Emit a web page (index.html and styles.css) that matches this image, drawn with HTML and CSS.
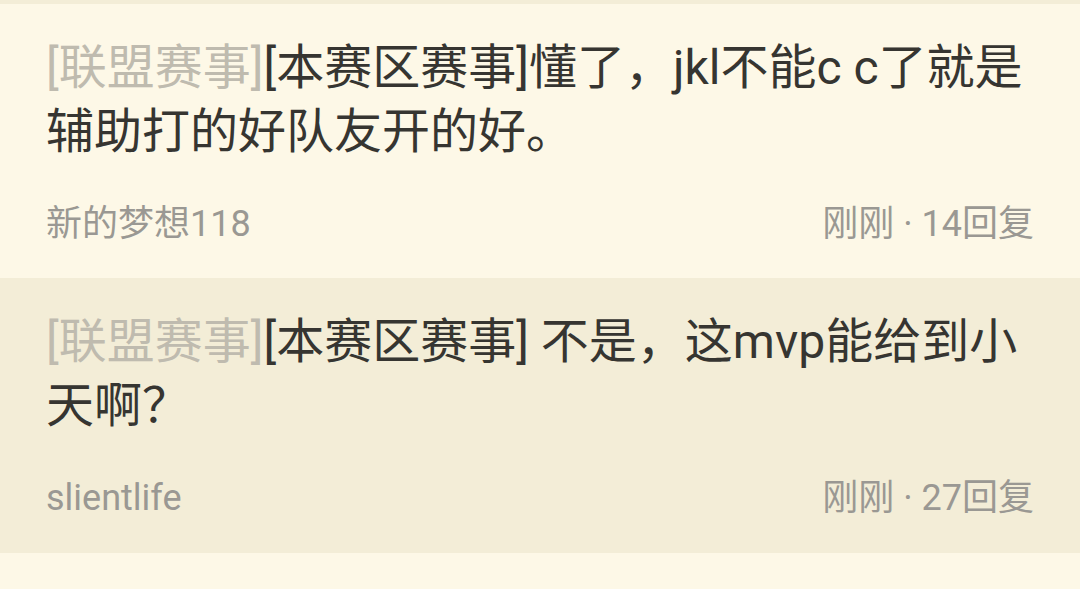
FILE: index.html
```html
<!DOCTYPE html>
<html lang="zh-CN">
<head>
<meta charset="utf-8">
<title>帖子列表</title>
<link rel="stylesheet" href="styles.css">
</head>
<body>
<div class="feed">
  <div class="feed-edge"></div>
  <article class="post">
    <p class="post-title"><span class="tag">[联盟赛事]</span>[本赛区赛事]懂了，jkl不能c c了就是辅助打的好队友开的好。</p>
    <div class="post-meta">
      <span class="author">新的梦想118</span>
      <span class="stats">刚刚 · 14回复</span>
    </div>
  </article>
  <article class="post post-read">
    <p class="post-title"><span class="tag">[联盟赛事]</span>[本赛区赛事] 不是，这mvp能给到小天啊？</p>
    <div class="post-meta">
      <span class="author">slientlife</span>
      <span class="stats">刚刚 · 27回复</span>
    </div>
  </article>
</div>
</body>
</html>
```
FILE: styles.css
```css
html, body {
  margin: 0;
  padding: 0;
}

body {
  width: 1080px;
  height: 589px;
  overflow: hidden;
  background: #fdf8e7;
  font-family: Roboto, "Noto Sans CJK SC", sans-serif;
}

.feed {
  display: flex;
  flex-direction: column;
}

.feed-edge {
  height: 4px;
  background: #f3edd7;
}

.post {
  height: 274px;
  box-sizing: border-box;
  padding: 32px 46px 0 46px;
  background: #fdf8e7;
  display: flex;
  flex-direction: column;
}

.post-read {
  height: 275px;
  background: #f3edd7;
}

.post-title {
  margin: 0;
  font-size: 48px;
  line-height: 64px;
  color: #363531;
}

.tag {
  color: #bfbbaf;
}

.post-meta {
  margin-top: 38px;
  display: flex;
  justify-content: space-between;
  align-items: baseline;
  font-size: 36px;
  line-height: 44px;
  color: #9a9893;
}
```
